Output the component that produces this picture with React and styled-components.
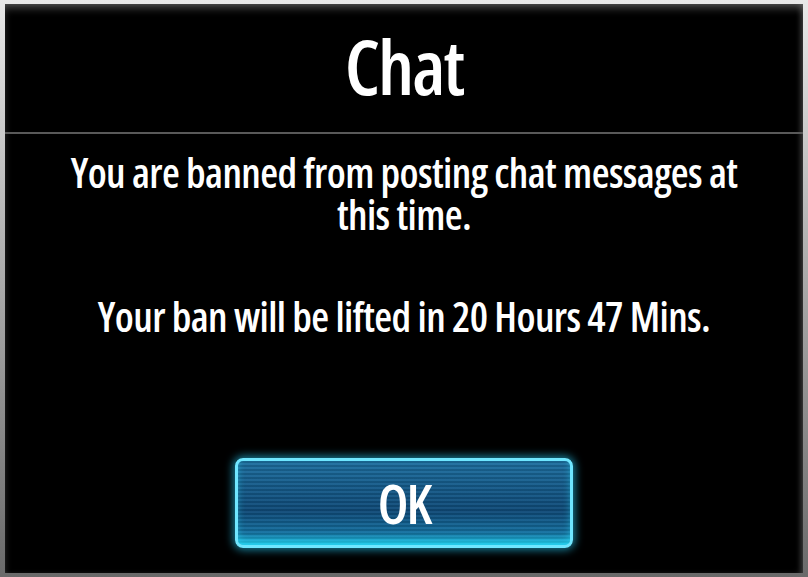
import React from "react";
import styled, { createGlobalStyle } from "styled-components";

const GlobalStyle = createGlobalStyle`
  html, body {
    margin: 0;
    padding: 0;
    background: #000;
  }
  body {
    font-family: "Open Sans", "Roboto", "Liberation Sans", sans-serif;
    font-stretch: 75%;
  }
`;

const Frame = styled.div`
  width: 808px;
  height: 577px;
  box-sizing: border-box;
  padding: 4px 5px 4px 5px;
  background: linear-gradient(180deg, #e8e8e8 0%, #b4b4b4 40%, #6a6a6a 100%);
  display: flex;
`;

const Panel = styled.div`
  flex: 1;
  background: #000;
  display: flex;
  flex-direction: column;
  box-shadow: inset 0 6px 8px -2px rgba(255, 255, 255, 0.28),
    inset -4px 0 6px -2px rgba(255, 255, 255, 0.18);
`;

const Header = styled.div`
  height: 128px;
  display: flex;
  align-items: center;
  justify-content: center;
  border-bottom: 2px solid #595959;
`;

const Title = styled.h1`
  margin: 0;
  color: #fff;
  font-size: 76px;
  font-weight: 600;
  font-stretch: 75%;
  letter-spacing: -2px;
  line-height: 1;
  transform: translateY(-2px);
`;

const Body = styled.div`
  flex: 1;
  display: flex;
  flex-direction: column;
  align-items: center;
  padding: 17px 0 25px;
`;

const Message = styled.p`
  margin: 0 0 ${(p) => p.$gap || 0}px;
  color: #fff;
  font-size: 41px;
  font-weight: 600;
  font-stretch: 75%;
  letter-spacing: -0.6px;
  line-height: 42px;
  text-align: center;
  white-space: nowrap;
`;

const Spacer = styled.div`
  flex: 1;
`;

const OkButton = styled.button`
  width: 338px;
  height: 90px;
  border-radius: 8px;
  border: 3px solid #6fe6ff;
  box-sizing: border-box;
  color: #fff;
  font-family: inherit;
  font-stretch: 75%;
  font-size: 54px;
  font-weight: 600;
  letter-spacing: -2px;
  cursor: pointer;
  background:
    repeating-linear-gradient(180deg, rgba(0, 0, 0, 0.12) 0 2px, rgba(255, 255, 255, 0.04) 2px 4px),
    linear-gradient(180deg, #1d6fa0 0%, #155b8a 30%, #0f4a78 60%, #1470a0 85%, #1aa8cf 100%);
  box-shadow: 0 0 8px 2px rgba(40, 210, 255, 0.6),
    inset 0 -6px 8px -2px rgba(40, 230, 255, 0.7);
`;

export default function App() {
  return (
    <>
      <GlobalStyle />
      <Frame>
        <Panel>
          <Header>
            <Title>Chat</Title>
          </Header>
          <Body>
            <Message $gap={60}>
              You are banned from posting chat messages at
              <br />
              this time.
            </Message>
            <Message>Your ban will be lifted in 20 Hours 47 Mins.</Message>
            <Spacer />
            <OkButton>OK</OkButton>
          </Body>
        </Panel>
      </Frame>
    </>
  );
}
